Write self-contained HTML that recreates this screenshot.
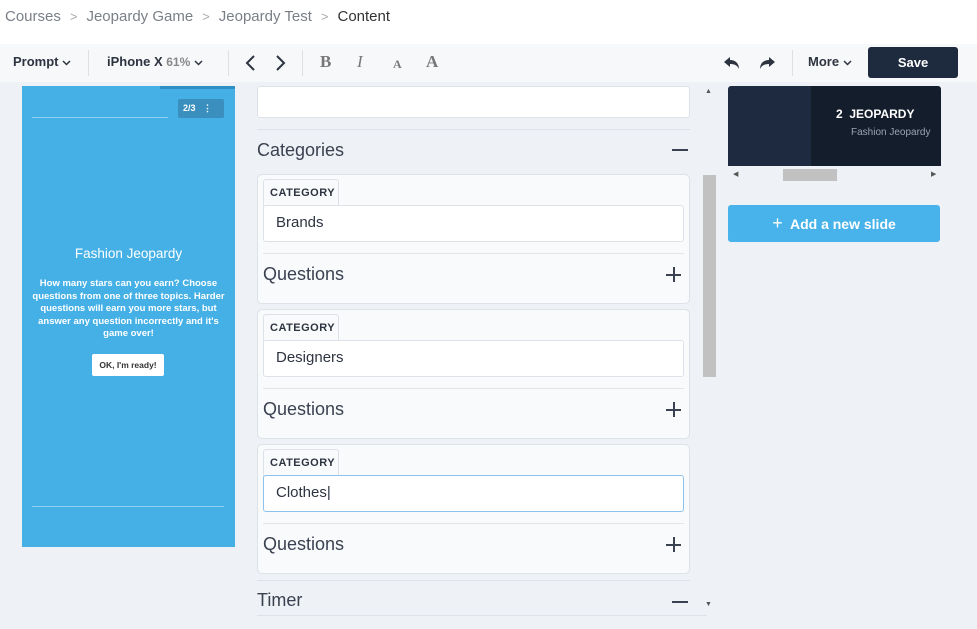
<!DOCTYPE html>
<html><head><style>
*{box-sizing:border-box;margin:0;padding:0}
body{width:977px;height:629px;overflow:hidden;background:#eef1f5;font-family:"Liberation Sans",sans-serif;position:relative;color:#2d3440}
.a{position:absolute}
.bc{top:0;left:0;width:977px;height:44px;background:#fff;font-size:15px;color:#7a7f87;padding:8px 0 0 5px}
.bc b{font-weight:normal;color:#aaa;margin:0 9px;font-size:13px}
.tb{top:44px;left:0;width:977px;height:38px;background:#f7f8fa}
.tb span{position:absolute;top:10px;font-size:13px;font-weight:bold;color:#2d3440}
.sep{position:absolute;top:6px;width:1px;height:26px;background:#dde1e6}
.card{left:257px;width:433px;height:130px;background:#f8fafc;border:1px solid #dde2e8;border-radius:5px}
.tab{left:5px;top:4px;width:76px;height:28px;border:1px solid #dde2e8;border-bottom:none;border-radius:3px 3px 0 0;background:#f8fafc;font-size:11px;font-weight:bold;letter-spacing:.5px;padding:7px 0 0 6px;color:#2d3440}
.inp{left:5px;top:30px;width:421px;height:37px;background:#fff;border:1px solid #dde2e8;border-radius:3px;font-size:15px;padding:8px 0 0 12px}
.dv{left:5px;top:78px;width:421px;height:1px;background:#e2e6ea}
.q{left:5px;top:89px;font-size:18px;color:#3a4150}
.pl{right:8px;top:92px;width:15px;height:15px}
.pl:before{content:"";position:absolute;left:0;top:6.5px;width:15px;height:2px;background:#3a4150}
.pl:after{content:"";position:absolute;top:0;left:6.5px;width:2px;height:15px;background:#3a4150}
</style></head><body>
<div class="a bc">Courses<b>&gt;</b>Jeopardy Game<b>&gt;</b>Jeopardy Test<b>&gt;</b><span style="color:#333">Content</span></div>
<div class="a tb">
<span style="left:13px">Prompt <svg width="9" height="6" viewBox="0 0 9 6"><path d="M1 1l3.5 3.5L8 1" stroke="#2d3440" stroke-width="1.5" fill="none"/></svg></span>
<div class="sep" style="left:88px"></div>
<span style="left:107px">iPhone X <span style="position:static;color:#888;font-size:12px">61%</span> <svg width="9" height="6" viewBox="0 0 9 6"><path d="M1 1l3.5 3.5L8 1" stroke="#2d3440" stroke-width="1.5" fill="none"/></svg></span>
<div class="sep" style="left:228px"></div>
<svg class="a" style="left:244px;top:11px" width="45" height="16" viewBox="0 0 45 16"><path d="M10 1L3 8l7 7M33 1l7 7-7 7" stroke="#2d3440" stroke-width="2" fill="none"/></svg>
<div class="sep" style="left:302px"></div>
<span style="left:320px;font-family:'Liberation Serif';font-size:17px;color:#777;top:8px">B</span>
<span style="left:357px;font-family:'Liberation Serif';font-size:17px;font-style:italic;font-weight:normal;color:#777;top:8px">I</span>
<span style="left:393px;font-family:'Liberation Serif';font-size:12px;color:#777;top:13px">A</span>
<span style="left:426px;font-family:'Liberation Serif';font-size:17px;color:#777;top:8px">A</span>
<svg class="a" style="left:724px;top:12px" width="16" height="14" viewBox="0 0 16 14"><path d="M6 1L0 6l6 5V8c4 0 7 1 9 5 0-5-3-9-9-9z" fill="#2d3440"/></svg>
<svg class="a" style="left:759px;top:12px" width="16" height="14" viewBox="0 0 16 14"><path d="M10 1l6 5-6 5V8c-4 0-7 1-9 5 0-5 3-9 9-9z" fill="#2d3440"/></svg>
<div class="sep" style="left:792px"></div>
<span style="left:808px">More <svg width="9" height="6" viewBox="0 0 9 6"><path d="M1 1l3.5 3.5L8 1" stroke="#2d3440" stroke-width="1.5" fill="none"/></svg></span>
<div class="a" style="left:868px;top:3px;width:90px;height:31px;background:#1e2a3e;border-radius:3px;color:#fff;font-size:13px;font-weight:bold;text-align:center;line-height:31px">Save</div>
</div>
<div class="a" style="left:22px;top:86px;width:213px;height:461px;background:#45b0e6"></div>
<div class="a" style="left:160px;top:86px;width:75px;height:3px;background:#2f8fc4"></div>
<div class="a" style="left:178px;top:99px;width:46px;height:19px;background:#3a8fbf;border-radius:2px;color:#fff;font-size:9px;font-weight:bold;padding:4px 0 0 5px">2/3 &nbsp;&nbsp;⋮</div>
<div class="a" style="left:32px;top:117px;width:136px;height:1px;background:#8dd0f0"></div>
<div class="a" style="left:32px;top:506px;width:192px;height:1px;background:#8dd0f0"></div>
<div class="a" style="left:22px;top:246px;width:213px;text-align:center;color:#fff;font-size:13.5px">Fashion Jeopardy</div>
<div class="a" style="left:30px;top:278px;width:197px;text-align:center;color:#fff;font-size:9.5px;font-weight:bold;line-height:12.5px">How many stars can you earn? Choose questions from one of three topics. Harder questions will earn you more stars, but answer any question incorrectly and it's game over!</div>
<div class="a" style="left:92px;top:354px;width:72px;height:22px;background:#fff;border-radius:2px;font-size:8.5px;font-weight:bold;text-align:center;line-height:22px;color:#333">OK, I'm ready!</div>

<div class="a" style="left:257px;top:86px;width:433px;height:32px;background:#fff;border:1px solid #dde2e8;border-radius:3px"></div>
<div class="a" style="left:257px;top:129px;width:433px;height:1px;background:#dde2e8"></div>
<div class="a" style="left:257px;top:140px;font-size:18px;color:#3a4150">Categories</div>
<div class="a" style="left:672px;top:149px;width:16px;height:2px;background:#3a4150"></div>

<div class="a card" style="top:174px"><div class="a tab">CATEGORY</div><div class="a inp">Brands</div><div class="a dv"></div><div class="a q">Questions</div><div class="a pl"></div></div>
<div class="a card" style="top:309px"><div class="a tab">CATEGORY</div><div class="a inp">Designers</div><div class="a dv"></div><div class="a q">Questions</div><div class="a pl"></div></div>
<div class="a card" style="top:444px"><div class="a tab">CATEGORY</div><div class="a inp" style="border-color:#8cc2ec">Clothes|</div><div class="a dv"></div><div class="a q">Questions</div><div class="a pl"></div></div>

<div class="a" style="left:257px;top:580px;width:433px;height:1px;background:#dde2e8"></div>
<div class="a" style="left:257px;top:590px;font-size:18px;color:#3a4150">Timer</div>
<div class="a" style="left:672px;top:601px;width:16px;height:2px;background:#3a4150"></div>
<div class="a" style="left:257px;top:615px;width:450px;height:1px;background:#dde2e8"></div>
<div class="a" style="left:703px;top:175px;width:13px;height:202px;background:#c1c1c1"></div>
<div class="a" style="left:705px;top:88px;font-size:7px;color:#555">▲</div>
<div class="a" style="left:705px;top:601px;font-size:7px;color:#555">▼</div>

<div class="a" style="left:728px;top:86px;width:83px;height:80px;background:#1e2a40;border-radius:3px 0 0 0"></div>
<div class="a" style="left:811px;top:86px;width:130px;height:80px;background:#141d2c;border-radius:0 3px 0 0"></div>
<div class="a" style="left:836px;top:107px;color:#fff;font-size:12px;font-weight:bold">2&nbsp; JEOPARDY</div>
<div class="a" style="left:851px;top:127px;color:#9aa3b0;font-size:10px">Fashion Jeopardy</div>
<div class="a" style="left:783px;top:169px;width:54px;height:12px;background:#c1c1c1"></div>
<div class="a" style="left:733px;top:170px;font-size:7px;color:#555">◀</div>
<div class="a" style="left:931px;top:170px;font-size:7px;color:#555">▶</div>
<div class="a" style="left:728px;top:205px;width:212px;height:37px;background:#47b3ea;border-radius:3px;color:#fff;font-size:14px;font-weight:bold;text-align:center;line-height:37px"><span style="font-weight:normal;font-size:18px">+</span>&nbsp; Add a new slide</div>
</body></html>
